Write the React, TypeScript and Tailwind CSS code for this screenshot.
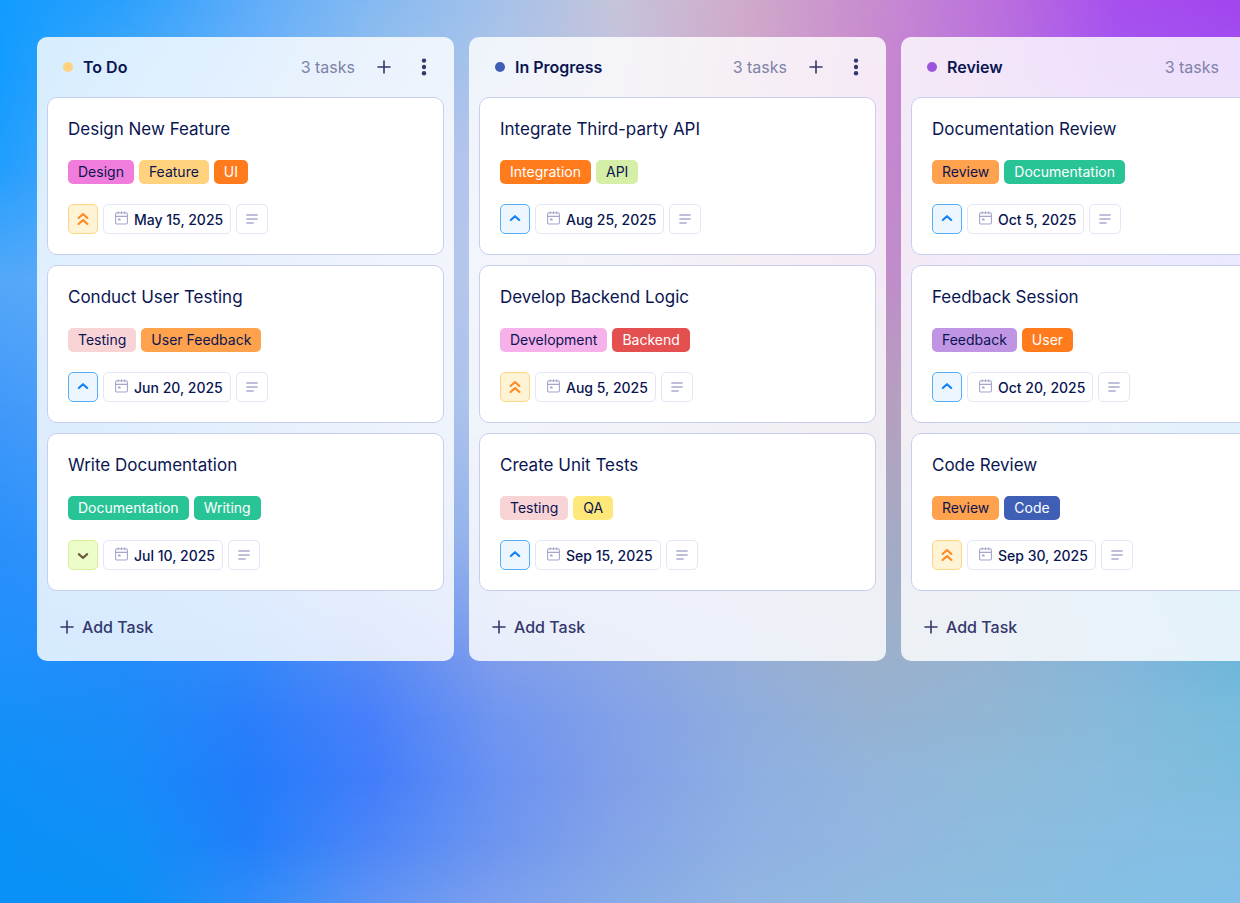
import React from "react";
import clsx from "clsx";

type Priority = "high" | "medium" | "low";

interface Tag {
  label: string;
  className: string;
}

interface Task {
  title: string;
  tags: Tag[];
  priority: Priority;
  date: string;
}

interface Column {
  name: string;
  dot: string;
  tasks: Task[];
}

const columns: Column[] = [
  {
    name: "To Do",
    dot: "bg-[#ffd37d]",
    tasks: [
      {
        title: "Design New Feature",
        tags: [
          { label: "Design", className: "bg-[#f07ddb] text-[#0a1551]" },
          { label: "Feature", className: "bg-[#ffd37d] text-[#0a1551]" },
          { label: "UI", className: "bg-[#ff7b1c] text-white" },
        ],
        priority: "high",
        date: "May 15, 2025",
      },
      {
        title: "Conduct User Testing",
        tags: [
          { label: "Testing", className: "bg-[#f8d4d7] text-[#0a1551]" },
          { label: "User Feedback", className: "bg-[#ffa24d] text-[#0a1551]" },
        ],
        priority: "medium",
        date: "Jun 20, 2025",
      },
      {
        title: "Write Documentation",
        tags: [
          { label: "Documentation", className: "bg-[#28c495] text-white" },
          { label: "Writing", className: "bg-[#28c495] text-white" },
        ],
        priority: "low",
        date: "Jul 10, 2025",
      },
    ],
  },
  {
    name: "In Progress",
    dot: "bg-[#3e5fb5]",
    tasks: [
      {
        title: "Integrate Third-party API",
        tags: [
          { label: "Integration", className: "bg-[#ff7b1c] text-white" },
          { label: "API", className: "bg-[#d5efa6] text-[#0a1551]" },
        ],
        priority: "medium",
        date: "Aug 25, 2025",
      },
      {
        title: "Develop Backend Logic",
        tags: [
          { label: "Development", className: "bg-[#f6b1ea] text-[#0a1551]" },
          { label: "Backend", className: "bg-[#e44f4f] text-white" },
        ],
        priority: "high",
        date: "Aug 5, 2025",
      },
      {
        title: "Create Unit Tests",
        tags: [
          { label: "Testing", className: "bg-[#f8d4d7] text-[#0a1551]" },
          { label: "QA", className: "bg-[#ffe87a] text-[#0a1551]" },
        ],
        priority: "medium",
        date: "Sep 15, 2025",
      },
    ],
  },
  {
    name: "Review",
    dot: "bg-[#9b56dc]",
    tasks: [
      {
        title: "Documentation Review",
        tags: [
          { label: "Review", className: "bg-[#ffa24d] text-[#0a1551]" },
          { label: "Documentation", className: "bg-[#28c495] text-white" },
        ],
        priority: "medium",
        date: "Oct 5, 2025",
      },
      {
        title: "Feedback Session",
        tags: [
          { label: "Feedback", className: "bg-[#c095e4] text-[#0a1551]" },
          { label: "User", className: "bg-[#ff7b1c] text-white" },
        ],
        priority: "medium",
        date: "Oct 20, 2025",
      },
      {
        title: "Code Review",
        tags: [
          { label: "Review", className: "bg-[#ffa24d] text-[#0a1551]" },
          { label: "Code", className: "bg-[#3e5fb5] text-white" },
        ],
        priority: "high",
        date: "Sep 30, 2025",
      },
    ],
  },
];

// Colour mesh behind the board: each row runs left to right and fades into the next one.
const mesh = [
  { at: 0, colors: ["#129cff", "#2ba1fc", "#5eacfa", "#85baf2", "#a4c1ea", "#c6c4da", "#d0abca", "#c98dd0", "#bc72dd", "#a850ee", "#a245f0"] },
  { at: 7, colors: ["#139cff", "#3fa6fc", "#66b0fa", "#90bdee", "#abc4ea", "#c6c2dc", "#cfa8ca", "#c98bce", "#b873dd", "#a456f0", "#a050f0"] },
  { at: 18, colors: ["#209efe", "#55aafb", "#7fb6f7", "#a4bfee", "#bac5ec", "#c8bedc", "#cda6ca", "#c68acb", "#b87cda", "#a66eee", "#a06cf2"] },
  { at: 31, colors: ["#54a8f9", "#60aaf8", "#80b2f6", "#a8c0ee", "#bac8ea", "#c3bcdf", "#c9a6ca", "#c28cc6", "#b594d8", "#9c92f0", "#8a8cf8"] },
  { at: 45, colors: ["#4299f9", "#50a2f8", "#72aef6", "#9abaf0", "#b2c6ea", "#b8bce0", "#bca8cc", "#b79cba", "#aeb0d0", "#7ab4ec", "#5cb0f4"] },
  { at: 60, colors: ["#2a90fb", "#3c94fa", "#5c9cf8", "#84a8f0", "#9ab6ea", "#a4b2e2", "#a8acd2", "#a6a9c2", "#9cb0cc", "#7ab6dc", "#62b8e4"] },
  { at: 73, colors: ["#1f90fb", "#228cfb", "#3388fa", "#5589f5", "#7f9cec", "#8aa6e4", "#94aed8", "#9cb0cc", "#94b4d2", "#84b6da", "#6db7db"] },
  { at: 79, colors: ["#1690f8", "#1c8cf9", "#2b7ffa", "#4a80fa", "#7096f0", "#84a1e8", "#8fadde", "#96b2d2", "#92b6d4", "#86badb", "#78bcdc"] },
  { at: 86, colors: ["#0e90f8", "#168cf9", "#237cfb", "#427dfa", "#6a92f2", "#829fe8", "#8eaee2", "#93b5dc", "#8fbada", "#88bcde", "#7cbddd"] },
  { at: 93, colors: ["#0a90f6", "#1090f7", "#227ffa", "#4c85f8", "#6d95f0", "#84a4e8", "#8fb0e4", "#93b6e0", "#8dbcde", "#87bee2", "#84bfe4"] },
  { at: 100, colors: ["#0a90f6", "#0a90f6", "#2f8cf8", "#5e93f4", "#7c9fee", "#86abe6", "#92b5e2", "#90bbdf", "#8bbee0", "#85c0e4", "#82bfe8"] },
];

const Backdrop = () => (
  <div aria-hidden="true" className="absolute inset-0">
    {mesh.map((row, i) => (
      <div
        key={row.at}
        className="absolute inset-0"
        style={{
          backgroundImage: `linear-gradient(to right, ${row.colors.join(", ")})`,
          maskImage:
            i === 0 ? undefined : `linear-gradient(to bottom, transparent ${mesh[i - 1].at}%, black ${row.at}%)`,
        }}
      />
    ))}
  </div>
);

const PlusIcon = () => (
  <svg viewBox="0 0 14 14" className="size-[14px]" fill="none" stroke="currentColor" strokeWidth="1.6" strokeLinecap="round">
    <path d="M7 1v12M1 7h12" />
  </svg>
);

const DotsIcon = () => (
  <svg viewBox="0 0 6 18" className="h-[18px] w-[6px]" fill="currentColor">
    <circle cx="3" cy="2.6" r="2.2" />
    <circle cx="3" cy="9" r="2.2" />
    <circle cx="3" cy="15.2" r="2.2" />
  </svg>
);

const CalendarIcon = () => (
  <svg viewBox="0 0 13 16" className="h-[16px] w-[13px] text-[#a3a6cb]" fill="none" stroke="currentColor" strokeLinecap="round">
    <rect x=".6" y="1.8" width="11.8" height="11.2" rx="1.4" strokeWidth="1.1" />
    <path d="M.6 5.4h11.8" strokeWidth="1.1" />
    <path d="M3.2.8v2M6.5.8v2M9.8.8v2" strokeWidth="1.1" />
    <rect x="3" y="7.4" width="2.6" height="2" rx=".5" fill="currentColor" stroke="none" />
  </svg>
);

const LinesIcon = () => (
  <svg viewBox="0 0 12 10" className="h-[10px] w-[12px] text-[#a9abcf]" fill="none" stroke="currentColor" strokeWidth="1.3" strokeLinecap="round">
    <path d="M.8 1h10.4M.8 5h10.4M.8 9h6.4" />
  </svg>
);

const priorityStyles: Record<Priority, { box: string; path: string }> = {
  high: {
    box: "border-[#ffd782] bg-[#fff3d6] text-[#ff8a26]",
    path: "M2.6 6 7 2l4.4 4M2.6 12 7 8l4.4 4",
  },
  medium: {
    box: "border-[#55aef5] bg-[#edf5ff] text-[#0f82f5]",
    path: "M2.8 8 7 4.2l4.2 3.8",
  },
  low: {
    box: "border-[#d8ee98] bg-[#ecfdc9] text-[#705c42]",
    path: "M2.8 6.1 7 9.9l4.2-3.8",
  },
};

const PriorityBadge = ({ priority }: { priority: Priority }) => (
  <button
    type="button"
    aria-label={`Priority: ${priority}`}
    className={clsx("flex size-[30px] items-center justify-center rounded-[5px] border", priorityStyles[priority].box)}
  >
    <svg viewBox="0 0 14 14" className="size-[14px]" fill="none" stroke="currentColor" strokeWidth="2.1" strokeLinecap="round" strokeLinejoin="round">
      <path d={priorityStyles[priority].path} />
    </svg>
  </button>
);

const TaskCard = ({ task }: { task: Task }) => (
  <article className="rounded-[10px] border border-[#c8ceed] bg-white p-5">
    <h3 className="text-[17px] leading-[22px] text-[#0a1551]">{task.title}</h3>
    <ul className="mt-5 flex gap-[5px]">
      {task.tags.map((tag) => (
        <li key={tag.label} className={clsx("rounded-[5px] px-[10px] text-[14px] leading-[24px]", tag.className)}>
          {tag.label}
        </li>
      ))}
    </ul>
    <div className="mt-5 flex gap-[5px]">
      <PriorityBadge priority={task.priority} />
      <button
        type="button"
        className="flex h-[30px] items-center gap-[6px] rounded-[5px] border border-[#e5e5f7] pr-[7px] pl-[11px] text-[14px] font-medium text-[#0a1551]"
      >
        <CalendarIcon />
        {task.date}
      </button>
      <button
        type="button"
        aria-label="Description"
        className="flex h-[30px] w-[32px] items-center justify-center rounded-[5px] border border-[#e5e5f7]"
      >
        <LinesIcon />
      </button>
    </div>
  </article>
);

const BoardColumn = ({ column }: { column: Column }) => (
  <section className="w-[417px] shrink-0 rounded-[10px] bg-white/82 px-[10px] pb-[13px]">
    <header className="flex h-[60px] items-center pr-[17px] pl-4">
      <span className={clsx("size-[10px] rounded-full", column.dot)} />
      <h2 className="ml-[10px] text-[16px] font-semibold text-[#0a1551]">{column.name}</h2>
      <span className="ml-auto text-[16px] text-[#7d82a8]">{column.tasks.length} tasks</span>
      <button type="button" aria-label={`Add task to ${column.name}`} className="ml-[22px] text-[#34386b]">
        <PlusIcon />
      </button>
      <button type="button" aria-label={`${column.name} options`} className="ml-[30px] text-[#34386b]">
        <DotsIcon />
      </button>
    </header>
    <div className="flex flex-col gap-[10px]">
      {column.tasks.map((task) => (
        <TaskCard key={task.title} task={task} />
      ))}
    </div>
    <button
      type="button"
      className="mt-[15px] flex h-[42px] items-center gap-2 px-[13px] text-[16px] font-medium text-[#34386b]"
    >
      <PlusIcon />
      Add Task
    </button>
  </section>
);

export default function App() {
  return (
    <main className="relative min-h-screen overflow-hidden font-['Inter',sans-serif]">
      <Backdrop />
      <div className="relative flex items-start gap-[15px] p-[37px]">
        {columns.map((column) => (
          <BoardColumn key={column.name} column={column} />
        ))}
      </div>
    </main>
  );
}
